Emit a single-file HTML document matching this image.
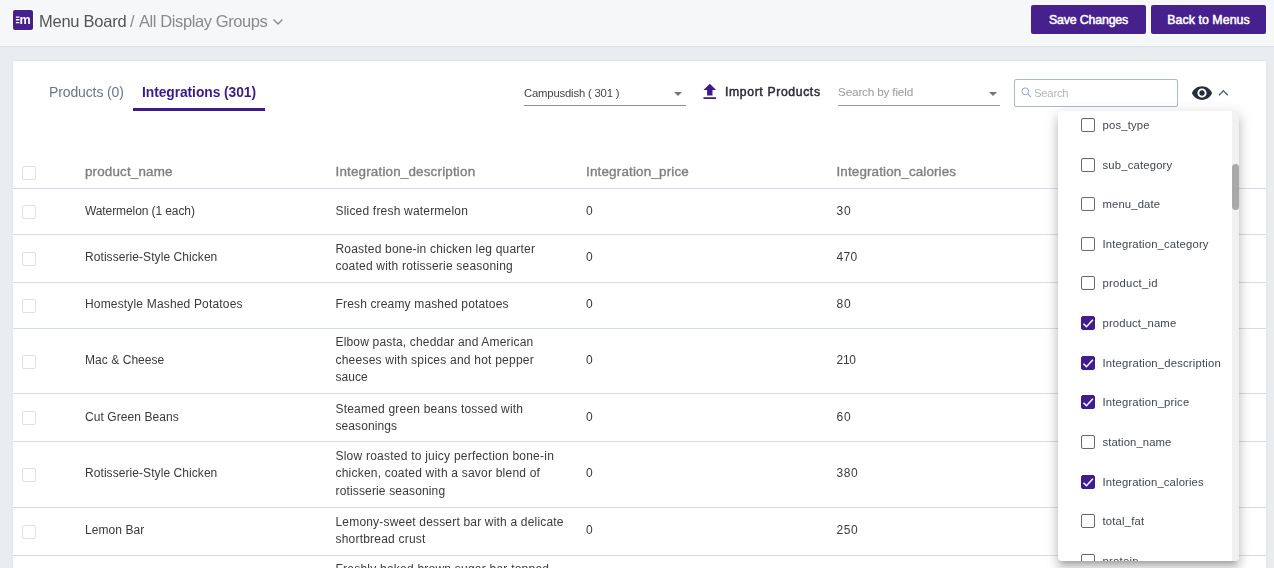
<!DOCTYPE html>
<html lang="en"><head><meta charset="utf-8"><title>Menu Board</title>
<style>
*{box-sizing:border-box}
html,body{margin:0;padding:0}
body{width:1274px;height:568px;overflow:hidden;background:#e9edf0;font-family:"Liberation Sans", sans-serif;color:#3c3c3c;position:relative}
span{white-space:nowrap}
.ttl,.btn span,.abs,table,#logo svg{will-change:transform}
#hdr{position:absolute;left:0;top:0;width:1274px;height:47px;background:#f6f7f9;border-bottom:1px solid #dcdfe3}
#logo{position:absolute;left:13px;top:10px;width:20px;height:20px;border-radius:2px;background:#46208c;overflow:hidden;box-shadow:0 0 0 1px rgba(255,255,255,.75)}
#logo svg{display:block}
.ttl{position:absolute;top:10px;height:22px;line-height:22px;color:#555;font-size:16.5px;white-space:nowrap}
.ttl.sub{color:#8a8a8a}
#chev{position:absolute;left:272px;top:17px}
.btn{position:absolute;top:5px;width:115px;height:29px;background:#46208c;border-radius:2px;color:#fff;-webkit-text-stroke:0.5px #fff;text-align:center;line-height:28px}
#card{position:absolute;left:13px;top:61px;width:1253px;height:520px;background:#fff;box-shadow:0 0 3px rgba(40,60,80,.07)}
.abs{position:absolute;white-space:nowrap}
#tab1{left:36.2px;top:22px;line-height:18px;color:#6c7684}
#tab2{left:129px;top:22px;line-height:18px;color:#3c1a8c;font-weight:700}
#tabline{position:absolute;left:120px;top:47px;width:132px;height:3px;background:#3c1a8c}
.uline{position:absolute;height:1px;background:#8e8e8e}
.tri{position:absolute;width:0;height:0;border-left:4px solid transparent;border-right:4px solid transparent;border-top:4px solid #757575}
#sbox{position:absolute;left:1001px;top:18px;width:164px;height:28px;border:1px solid #adb9c6;border-radius:2px;background:#fff}
table{position:absolute;left:0;top:93px;width:1253px;border-collapse:collapse;table-layout:fixed}
th,td{padding:0;font-size:12px;text-align:left;vertical-align:middle;font-weight:400;line-height:17.5px;border-bottom:1px solid #d5dee6}
th{height:34.5px;color:#808080;-webkit-text-stroke:0.38px #808080;padding-top:1px}
.c{position:relative}
td{color:#3a3a3a;padding-top:1px}
.ck{width:72px;padding-left:9.5px}
.cb{display:block;width:14px;height:14px;margin-left:-0.3px;border:1.2px solid #dce0e5;border-radius:2px;background:#fff}
#pop{position:absolute;left:1058px;top:111px;width:181px;height:450px;background:#fff;border-radius:4px;overflow:hidden;
 box-shadow:0 5px 5px -3px rgba(0,0,0,.2),0 8px 10px 1px rgba(0,0,0,.14),0 3px 14px 2px rgba(0,0,0,.12)}
#pop .trk{position:absolute;right:0;top:0;width:7px;height:100%;background:#f1f1f1}
#pop .thb{position:absolute;right:0;top:53px;width:7px;height:46px;border-radius:4px;background:#a9a9a9}
#popin{position:absolute;left:0;top:0;width:174px;height:450px;will-change:transform}
.it{position:absolute;left:23px;height:15px;line-height:14px;font-size:11.3px;color:#40464f;white-space:nowrap}
.pc{position:absolute;left:0;top:0;width:14px;height:14px;border:1.25px solid #686868;border-radius:2px;background:#fff}
.pc.on{background:#3f1d8e;border-color:#3f1d8e}
.pc svg{position:absolute;left:-1.25px;top:-1px;width:14px;height:14px}
.it span{position:absolute;left:21.5px;top:0}
</style></head><body>
<div id="hdr">
 <div id="logo"><svg width="20" height="20" viewBox="0 0 20 20"><text x="6.5" y="13.5" font-family="Liberation Sans, sans-serif" font-weight="700" font-size="12.6" fill="#fff">m</text><path d="M2.9 7.05h3.5M2.9 9.75h3.5M2.9 12.65h3.5" stroke="#fff" stroke-width="1.35"/></svg></div>
 <div class="ttl" style="left:39.2px"><span style="font-size:16.5px;letter-spacing:-0.255px;">Menu Board</span></div>
 <div class="ttl sub" style="left:129.8px">/</div>
 <div class="ttl sub" style="left:139.2px"><span style="font-size:16.5px;letter-spacing:-0.407px;">All Display Groups</span></div>
 <svg id="chev" width="12" height="10" viewBox="0 0 12 10"><path d="M1.6 2.6L6 7l4.4-4.4" fill="none" stroke="#8a8a8a" stroke-width="1.4"/></svg>
 <div class="btn" style="left:1031px"><span style="font-size:12.4px;letter-spacing:-0.172px;">Save Changes</span></div>
 <div class="btn" style="left:1151px"><span style="font-size:12.4px;letter-spacing:0.053px;">Back to Menus</span></div>
</div>
<div id="card">
 <div class="abs" id="tab1"><span style="font-size:14px;letter-spacing:-0.123px;">Products (0)</span></div>
 <div class="abs" id="tab2"><span style="font-size:13.8px;letter-spacing:-0.059px;">Integrations (301)</span></div>
 <div id="tabline"></div>

 <div class="abs" style="left:511.3px;top:23px;line-height:16px;color:#444"><span style="font-size:11.3px;letter-spacing:-0.181px;">Campusdish ( 301 )</span></div>
 <div class="uline" style="left:511px;top:44px;width:162px"></div>
 <div class="tri" style="left:661px;top:31px"></div>

 <svg class="abs" style="left:685.7px;top:20.2px" width="21.6" height="21.6" viewBox="0 0 24 24"><path d="M9 16h6v-6h4l-7-7-7 7h4zm-4 2h14v2H5z" fill="#3c1a8c"/></svg>
 <div class="abs" style="left:712.2px;top:21.2px;line-height:17px;color:#2e2e3a;-webkit-text-stroke:0.5px #2e2e3a"><span style="font-size:12.2px;letter-spacing:0.641px;">Import Products</span></div>

 <div class="abs" style="left:824.8px;top:22.4px;line-height:16px;color:#9a9a9a"><span style="font-size:11.8px;letter-spacing:-0.203px;">Search by field</span></div>
 <div class="uline" style="left:825px;top:44px;width:162px;background:#9a9a9a"></div>
 <div class="tri" style="left:976px;top:31px"></div>

 <div id="sbox">
  <svg class="abs" style="left:5.6px;top:6.6px" width="11" height="11" viewBox="0 0 11 11"><circle cx="4.3" cy="4.3" r="3.4" fill="none" stroke="#93a5b8" stroke-width="1"/><path d="M6.8 6.8l3 3" stroke="#93a5b8" stroke-width="1.1"/></svg>
  <div class="abs" style="left:19px;top:3.6px;line-height:16px;color:#b6b6b6"><span style="font-size:11.4px;letter-spacing:-0.279px;">Search</span></div>
 </div>

 <svg class="abs" style="left:1177.9px;top:20.9px" width="22" height="22" viewBox="0 0 24 24"><path d="M12 4.5C7 4.5 2.73 7.61 1 12c1.73 4.39 6 7.500 11 7.500s9.270-3.110 11-7.500c-1.730-4.390-6-7.500-11-7.500zM12 17c-2.760 0-5-2.240-5-5s2.240-5 5-5 5 2.240 5 5-2.240 5-5 5zm0-8c-1.660 0-3 1.340-3 3s1.340 3 3 3 3-1.340 3-3-1.340-3-3-3z" fill="#272e39"/></svg>
 <svg class="abs" style="left:1204px;top:27px" width="14" height="10" viewBox="0 0 14 10"><path d="M2 7.3L6.4 2.8l4.4 4.5" fill="none" stroke="#5a6877" stroke-width="1.5"/></svg>

 <table>
  <colgroup><col style="width:72px"><col style="width:250.5px"><col style="width:250.5px"><col style="width:250.5px"><col style="width:250.5px"><col></colgroup>
  <thead><tr><th class="ck"><i class="cb" style="position:relative;top:1px"></i></th><th><div class="c" style="top:1px"><span style="font-size:13.4px;letter-spacing:0.163px;">product_name</span></div></th><th><div class="c" style="top:1px"><span style="font-size:13.4px;letter-spacing:0.187px;">Integration_description</span></div></th><th><div class="c" style="top:1px"><span style="font-size:13.4px;letter-spacing:0.191px;">Integration_price</span></div></th><th><div class="c" style="top:1px"><span style="font-size:13.4px;letter-spacing:0.138px;">Integration_calories</span></div></th><th></th></tr></thead>
  <tbody>
<tr style="height:46px"><td class="ck"><i class="cb"></i></td><td><div class="c"><span style="font-size:12px;letter-spacing:-0.095px;">Watermelon (1 each)</span></div></td><td><div class="c"><span style="font-size:12px;letter-spacing:0.193px;">Sliced fresh watermelon</span></div></td><td><div class="c"><span style="font-size:12px;letter-spacing:0.612px;">0</span></div></td><td><div class="c"><span style="font-size:12px;letter-spacing:0.741px;">30</span></div></td><td></td></tr>
<tr style="height:48px"><td class="ck"><i class="cb"></i></td><td><div class="c" style="top:-1px"><span style="font-size:12px;letter-spacing:0.069px;">Rotisserie-Style Chicken</span></div></td><td><div class="c" style="top:-1px"><span style="font-size:12px;letter-spacing:0.194px;">Roasted bone-in chicken leg quarter</span><br><span style="font-size:12px;letter-spacing:0.208px;">coated with rotisserie seasoning</span></div></td><td><div class="c" style="top:-1px"><span style="font-size:12px;letter-spacing:0.612px;">0</span></div></td><td><div class="c" style="top:-1px"><span style="font-size:12px;letter-spacing:0.384px;">470</span></div></td><td></td></tr>
<tr style="height:46px"><td class="ck"><i class="cb"></i></td><td><div class="c" style="top:-1px"><span style="font-size:12px;letter-spacing:0.17px;">Homestyle Mashed Potatoes</span></div></td><td><div class="c" style="top:-1px"><span style="font-size:12px;letter-spacing:0.157px;">Fresh creamy mashed potatoes</span></div></td><td><div class="c" style="top:-1px"><span style="font-size:12px;letter-spacing:0.612px;">0</span></div></td><td><div class="c" style="top:-1px"><span style="font-size:12px;letter-spacing:0.741px;">80</span></div></td><td></td></tr>
<tr style="height:65px"><td class="ck"><i class="cb"></i></td><td><div class="c" style="top:-1px"><span style="font-size:12px;letter-spacing:0.054px;">Mac &amp; Cheese</span></div></td><td><div class="c" style="top:-1px"><span style="font-size:12px;letter-spacing:0.177px;">Elbow pasta, cheddar and American</span><br><span style="font-size:12px;letter-spacing:0.224px;">cheeses with spices and hot pepper</span><br><span style="font-size:12px;letter-spacing:0.067px;">sauce</span></div></td><td><div class="c" style="top:-1px"><span style="font-size:12px;letter-spacing:0.612px;">0</span></div></td><td><div class="c" style="top:-1px"><span style="font-size:12px;letter-spacing:-0.266px;">210</span></div></td><td></td></tr>
<tr style="height:48px"><td class="ck"><i class="cb"></i></td><td><div class="c"><span style="font-size:12px;letter-spacing:0.077px;">Cut Green Beans</span></div></td><td><div class="c"><span style="font-size:12px;letter-spacing:0.202px;">Steamed green beans tossed with</span><br><span style="font-size:12px;letter-spacing:0.087px;">seasonings</span></div></td><td><div class="c"><span style="font-size:12px;letter-spacing:0.612px;">0</span></div></td><td><div class="c"><span style="font-size:12px;letter-spacing:0.741px;">60</span></div></td><td></td></tr>
<tr style="height:66px"><td class="ck"><i class="cb"></i></td><td><div class="c" style="top:-1px"><span style="font-size:12px;letter-spacing:0.069px;">Rotisserie-Style Chicken</span></div></td><td><div class="c" style="top:-1px"><span style="font-size:12px;letter-spacing:0.227px;">Slow roasted to juicy perfection bone-in</span><br><span style="font-size:12px;letter-spacing:0.212px;">chicken, coated with a savor blend of</span><br><span style="font-size:12px;letter-spacing:0.151px;">rotisserie seasoning</span></div></td><td><div class="c" style="top:-1px"><span style="font-size:12px;letter-spacing:0.612px;">0</span></div></td><td><div class="c" style="top:-1px"><span style="font-size:12px;letter-spacing:0.584px;">380</span></div></td><td></td></tr>
<tr style="height:48px"><td class="ck"><i class="cb"></i></td><td><div class="c" style="top:-1px"><span style="font-size:12px;letter-spacing:0.062px;">Lemon Bar</span></div></td><td><div class="c" style="top:-1px"><span style="font-size:12px;letter-spacing:0.185px;">Lemony-sweet dessert bar with a delicate</span><br><span style="font-size:12px;letter-spacing:0.212px;">shortbread crust</span></div></td><td><div class="c" style="top:-1px"><span style="font-size:12px;letter-spacing:0.612px;">0</span></div></td><td><div class="c" style="top:-1px"><span style="font-size:12px;letter-spacing:0.584px;">250</span></div></td><td></td></tr>
<tr style="height:48px"><td class="ck"></td><td></td><td style="vertical-align:top;padding-top:7px"><div class="c" style="top:-2px"><span style="font-size:12px;letter-spacing:0.23px;">Freshly baked brown sugar bar topped</span></div></td><td></td><td></td><td></td></tr>
  </tbody>
 </table>
</div>
<div id="pop">
 <div class="trk"></div><div class="thb"></div>
 <div id="popin">
<div class="it" style="top:7px"><i class="pc"></i><span style="font-size:11.3px;letter-spacing:0.163px;">pos_type</span></div>
<div class="it" style="top:47px"><i class="pc"></i><span style="font-size:11.3px;letter-spacing:0.17px;">sub_category</span></div>
<div class="it" style="top:86px"><i class="pc"></i><span style="font-size:11.3px;letter-spacing:0.121px;">menu_date</span></div>
<div class="it" style="top:126px"><i class="pc"></i><span style="font-size:11.3px;letter-spacing:0.158px;">Integration_category</span></div>
<div class="it" style="top:165px"><i class="pc"></i><span style="font-size:11.3px;letter-spacing:0.248px;">product_id</span></div>
<div class="it" style="top:205px"><i class="pc on"><svg viewBox="0 0 14 14"><path d="M2.5 7.8l3 2.9L11.9 3.7" fill="none" stroke="#fff" stroke-width="1.55"/></svg></i><span style="font-size:11.3px;letter-spacing:0.133px;">product_name</span></div>
<div class="it" style="top:245px"><i class="pc on"><svg viewBox="0 0 14 14"><path d="M2.5 7.8l3 2.9L11.9 3.7" fill="none" stroke="#fff" stroke-width="1.55"/></svg></i><span style="font-size:11.3px;letter-spacing:0.177px;">Integration_description</span></div>
<div class="it" style="top:284px"><i class="pc on"><svg viewBox="0 0 14 14"><path d="M2.5 7.8l3 2.9L11.9 3.7" fill="none" stroke="#fff" stroke-width="1.55"/></svg></i><span style="font-size:11.3px;letter-spacing:0.159px;">Integration_price</span></div>
<div class="it" style="top:324px"><i class="pc"></i><span style="font-size:11.3px;letter-spacing:0.097px;">station_name</span></div>
<div class="it" style="top:364px"><i class="pc on"><svg viewBox="0 0 14 14"><path d="M2.5 7.8l3 2.9L11.9 3.7" fill="none" stroke="#fff" stroke-width="1.55"/></svg></i><span style="font-size:11.3px;letter-spacing:0.136px;">Integration_calories</span></div>
<div class="it" style="top:403px"><i class="pc"></i><span style="font-size:11.3px;letter-spacing:0.187px;">total_fat</span></div>
<div class="it" style="top:443px"><i class="pc"></i><span style="font-size:11.3px;letter-spacing:0.242px;">protein</span></div>
 </div>
</div>
</body></html>
